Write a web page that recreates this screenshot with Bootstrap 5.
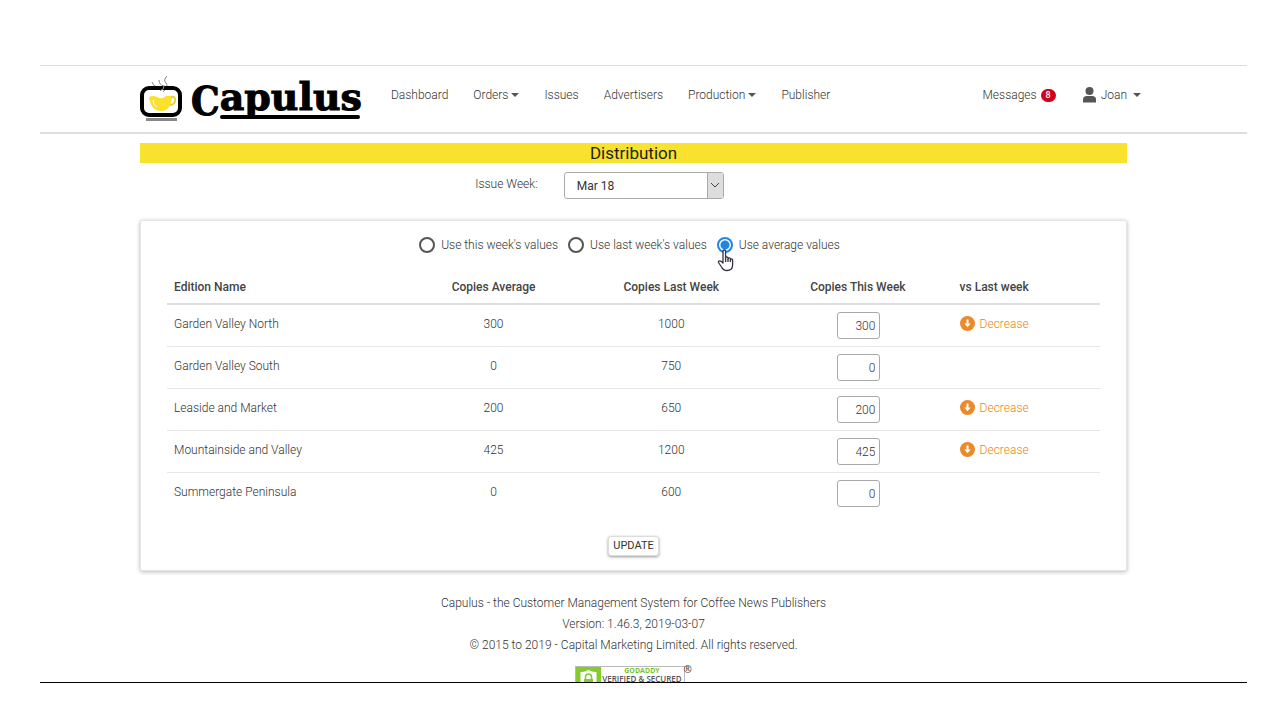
<!DOCTYPE html>
<html lang="en">
<head>
<meta charset="utf-8">
<meta name="viewport" content="width=device-width, initial-scale=1">
<title>Capulus - Distribution</title>
<link href="https://cdn.jsdelivr.net/npm/bootstrap@5.3.0/dist/css/bootstrap.min.css" rel="stylesheet">
<style>
body{font-family:Roboto,"Liberation Sans",sans-serif;font-size:12px;font-weight:300;line-height:18px;color:#333;background:#fff;padding:65px 33px 37px 40px}
.viewport-frame{border-bottom:1px solid #000;min-height:0}
.site-nav{border-top:1px solid #ddd;border-bottom:2px solid #ddd;height:69px;padding:0 106px 0 100px}
.site-nav a,.site-nav .menu-btn{color:#333;text-decoration:none;font-size:12px;font-weight:300;line-height:18px}
.menu-btn{background:none;border:0;padding:0}
.menu-btn::after{content:"";display:inline-block;border:4px solid transparent;border-top-color:#555;border-bottom:0;margin-left:3px;vertical-align:2px}
.user-links .menu-btn::after{margin-left:6px}
.main-links{gap:25px;margin-left:29px;padding-bottom:8px}
.user-links{gap:26px;padding-bottom:8px}
.count-badge{background:#d0021b;font-size:9px;font-weight:500;line-height:13px;width:15px;padding:0}
.brand-word{font-family:"DejaVu Serif",serif;font-weight:700;font-size:38px;line-height:44px;color:#000;-webkit-text-stroke:1px #000}
.brand-initial{font-family:"DejaVu Serif Condensed","DejaVu Serif",serif;font-size:40px;vertical-align:-5px}
.brand-rest{display:inline-block;position:relative}
.brand-rest::after{content:"";position:absolute;left:0;right:2px;bottom:0;height:4px;border-radius:2px;background:#000}
.page-body{margin:0 120px 0 100px;padding-top:9px}
.page-title{background:#f9e22d;color:#222;font-size:17px;font-weight:400;line-height:20px;margin:0}
.week-row{padding:9px 68px 0 0}
.week-select{width:160px;height:27px;border:1px solid #aaa;border-radius:3px;background:#fff;color:#333;font-size:12px;padding:0 12px;appearance:none}
.week-wrap{margin-left:26px}
.week-label{padding-top:3px}
.select-arrow{position:absolute;right:1px;top:1px;bottom:1px;width:16px;background:#ddd;border-left:1px solid #aaa;pointer-events:none}
.panel{background:#fff;border:1px solid #e4e4e4;border-radius:2px;box-shadow:0 1px 4px rgba(0,0,0,.28);margin-top:21px;padding:15px 26px 14px}
.option-row{gap:10px;padding-right:8px}
.option-row label{gap:6px}
.round-radio{appearance:none;width:16px;height:16px;border:2px solid #555;border-radius:50%;margin:0;background:#fff}
.round-radio:checked{border-color:#2186e0;background:radial-gradient(circle,#2186e0 4px,#fff 5px)}
.hand{position:absolute;left:0;top:13px}
.editions{color:#333;margin:12px 0 0;table-layout:fixed;width:100%}
.editions th{font-weight:500;color:#444;padding:12px 7px 7px;border-bottom:2px solid #ddd;vertical-align:middle}
.editions td{padding:5px 7px 9px;height:42px;border-bottom:1px solid #e6e6e6;vertical-align:middle;line-height:18px}
.editions tr:last-child td{border-bottom:0}
.editions td:nth-child(4){padding:7px 0 7px 2px}
.copies-box{display:inline-block;width:43px;height:27px;border:1px solid #aaa;border-radius:3px;color:#333;font-size:12px;font-weight:300;text-align:right;padding:0 4px;vertical-align:top}
.decrease{color:#e8851d;gap:5px}
.update-row{padding-top:21px}
.update-btn{background:#fff;color:#333;border:1px solid #ddd;border-radius:3px;box-shadow:0 1px 3px rgba(0,0,0,.4);font-size:11px;line-height:18px;padding:0 4px}
.site-foot p{margin:0 0 3px}
.site-foot{padding-top:23px}
.seal-row{padding:9px 8px 0 0}
.seal{width:110px;height:32px;border:1px solid #bbb;color:#555;line-height:8px;font-family:"Open Sans",sans-serif}
.seal-lock{width:25px;background:#84cc2c}
.seal-name{color:#7ac52b;font-size:7px;font-weight:700}
.seal-text{font-size:8px;line-height:8px;font-weight:600;white-space:nowrap}
.seal-mark{position:absolute;left:100%;top:-6px;font-size:10px;line-height:16px;font-weight:600;color:#444}
</style>
</head>
<body class="vh-100 d-flex flex-column overflow-hidden">
<div class="viewport-frame flex-grow-1 overflow-hidden">
  <nav class="site-nav d-flex align-items-center">
    <a href="#" class="d-flex align-items-center text-nowrap" aria-label="Capulus home">
      <svg width="43" height="48" viewBox="0 0 43 48" fill="none">
        <path d="M12 7q1 4 5 5M19 5q0 5 5 6M27 1q-4 4-1 7t-3 9" stroke="#888"/>
        <rect x="2" y="13" width="38" height="27" rx="7" stroke="#000" stroke-width="4"/>
        <path d="M20 16q5-2 4-6" stroke="#999"/>
        <path d="M9 22q4-2 8 0 5 3 9-1 3-1 6 1-1 14-11 14T9 22z" fill="#f9e12c"/>
        <path d="M31 22q5-1 4 4-1 4-5 4" stroke="#e8d13a" stroke-width="2"/>
        <path d="M13 25q0 5 4 7" stroke="#fff"/>
        <path d="M6 43h31v3H6z" fill="#888"/>
      </svg>
      <span class="brand-word ms-2"><span class="brand-initial">C</span><span class="brand-rest">apulus</span></span>
    </a>
    <div class="main-links d-flex text-nowrap">
      <a href="#">Dashboard</a>
      <button class="menu-btn" type="button">Orders</button>
      <a href="#">Issues</a>
      <a href="#">Advertisers</a>
      <button class="menu-btn" type="button">Production</button>
      <a href="#">Publisher</a>
    </div>
    <div class="user-links d-flex align-items-center text-nowrap ms-auto">
      <a href="#" class="d-flex align-items-center gap-1">Messages <span class="badge rounded-pill count-badge">8</span></a>
      <button class="menu-btn d-flex align-items-center" type="button">
        <svg class="me-1" width="15" height="16" viewBox="0 0 15 16" fill="#555"><circle cx="7.5" cy="4" r="4"/><path d="M1 15.500v-3q0-3.500 4-3.500h5q4 0 4 3.500v3z"/></svg>
        Joan
      </button>
    </div>
  </nav>

  <main class="page-body">
    <h1 class="page-title text-center">Distribution</h1>
    <div class="week-row d-flex justify-content-center">
      <label class="week-label" for="week">Issue Week:</label>
      <div class="week-wrap position-relative">
        <select id="week" class="week-select"><option>Mar 18</option></select>
        <span class="select-arrow d-flex align-items-center justify-content-center"><svg width="10" height="7" viewBox="0 0 10 7" fill="none" stroke="#444"><path d="M1 1l4 4 4-4"/></svg></span>
      </div>
    </div>

    <form class="panel">
      <div class="option-row d-flex justify-content-center">
        <label class="d-flex align-items-center"><input class="round-radio" type="radio" name="src">Use this week's values</label>
        <label class="d-flex align-items-center"><input class="round-radio" type="radio" name="src">Use last week's values</label>
        <label class="d-flex align-items-center position-relative"><input class="round-radio" type="radio" name="src" checked>Use average values
          <svg class="hand" width="18" height="23" viewBox="0 0 18 23" fill="#fff" stroke="#334" stroke-width="1.300" stroke-linejoin="round"><path d="M6 14V2.500Q6 1 7.300 1T8.600 2.500V9q0-1.200 1.200-1.200T11 9v1q0-1.200 1.200-1.200t1.200 1.200v1q0-1.200 1.100-1.200T15.600 11v5q0 5.500-5.500 5.500-4 0-5.600-3.500L1.500 13.500Q1.200 12 2.500 11.800T6 14z"/><path d="M8.600 9v4M11 10v3M13.400 11v2" fill="none"/></svg>
        </label>
      </div>
      <table class="editions">
        <colgroup><col style="width:25.8%"><col style="width:18.4%"><col style="width:19.700%"><col style="width:20.300%"><col style="width:15.800%"></colgroup>
        <thead><tr><th scope="col">Edition Name</th><th scope="col" class="text-center">Copies Average</th><th scope="col" class="text-center">Copies Last Week</th><th scope="col" class="text-center">Copies This Week</th><th scope="col">vs Last week</th></tr></thead>
        <tbody>
          <tr><td>Garden Valley North</td><td class="text-center">300</td><td class="text-center">1000</td><td class="text-center"><input class="copies-box" aria-label="Garden Valley North copies" value="300"></td><td><span class="decrease d-flex align-items-center"><svg width="15" height="15" viewBox="0 0 15 15"><circle cx="7.5" cy="7.5" r="7.500" fill="#e98a2b"/><path d="M6.500 3.500h2V7.500h2.200L7.500 11.200 4.300 7.500h2.200z" fill="#fff"/></svg>Decrease</span></td></tr>
          <tr><td>Garden Valley South</td><td class="text-center">0</td><td class="text-center">750</td><td class="text-center"><input class="copies-box" aria-label="Garden Valley South copies" value="0"></td><td></td></tr>
          <tr><td>Leaside and Market</td><td class="text-center">200</td><td class="text-center">650</td><td class="text-center"><input class="copies-box" aria-label="Leaside and Market copies" value="200"></td><td><span class="decrease d-flex align-items-center"><svg width="15" height="15" viewBox="0 0 15 15"><circle cx="7.5" cy="7.5" r="7.500" fill="#e98a2b"/><path d="M6.500 3.500h2V7.500h2.200L7.500 11.200 4.300 7.500h2.200z" fill="#fff"/></svg>Decrease</span></td></tr>
          <tr><td>Mountainside and Valley</td><td class="text-center">425</td><td class="text-center">1200</td><td class="text-center"><input class="copies-box" aria-label="Mountainside and Valley copies" value="425"></td><td><span class="decrease d-flex align-items-center"><svg width="15" height="15" viewBox="0 0 15 15"><circle cx="7.5" cy="7.5" r="7.500" fill="#e98a2b"/><path d="M6.500 3.500h2V7.500h2.200L7.500 11.200 4.300 7.500h2.200z" fill="#fff"/></svg>Decrease</span></td></tr>
          <tr><td>Summergate Peninsula</td><td class="text-center">0</td><td class="text-center">600</td><td class="text-center"><input class="copies-box" aria-label="Summergate Peninsula copies" value="0"></td><td></td></tr>
        </tbody>
      </table>
      <div class="update-row text-center"><button class="update-btn" type="button">UPDATE</button></div>
    </form>

    <footer class="site-foot text-center">
      <p>Capulus - the Customer Management System for Coffee News Publishers</p>
      <p>Version: 1.46.3, 2019-03-07</p>
      <p>© 2015 to 2019 - Capital Marketing Limited. All rights reserved.</p>
      <div class="seal-row d-flex justify-content-center">
      <div class="seal position-relative d-flex">
        <span class="seal-lock d-flex justify-content-center"><svg width="17" height="26" viewBox="0 0 17 26"><path d="M8.500 3q4 2.500 8 2v9q0 7-8 11-8-4-8-11V5q4 .5 8-2z" fill="#fff"/><path d="M4 12h9v7H4z" fill="#84cc2c"/><path d="M5.500 12v-2q0-3 3-3t3 3v2" fill="none" stroke="#84cc2c" stroke-width="1.500"/></svg></span>
        <span class="flex-grow-1"><span class="seal-name d-block">GODADDY</span><span class="seal-text d-block">VERIFIED &amp; SECURED</span></span>
        <span class="seal-mark">®</span>
      </div>
      </div>
    </footer>
  </main>
</div>
<script src="https://cdn.jsdelivr.net/npm/bootstrap@5.3.0/dist/js/bootstrap.bundle.min.js"></script>
</body>
</html>
